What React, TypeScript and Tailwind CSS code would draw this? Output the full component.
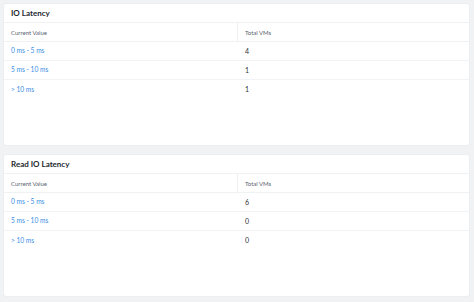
import React from "react";

type Row = { label: string; total: number };

const cards: { title: string; rows: Row[] }[] = [
  {
    title: "IO Latency",
    rows: [
      { label: "0 ms - 5 ms", total: 4 },
      { label: "5 ms - 10 ms", total: 1 },
      { label: "> 10 ms", total: 1 },
    ],
  },
  {
    title: "Read IO Latency",
    rows: [
      { label: "0 ms - 5 ms", total: 6 },
      { label: "5 ms - 10 ms", total: 0 },
      { label: "> 10 ms", total: 0 },
    ],
  },
];

function LatencyCard({ title, rows }: { title: string; rows: Row[] }) {
  return (
    <div className="bg-white rounded-[3px] border border-[#eceef0] h-[143px] flex flex-col">
      <div className="h-[18px] flex items-center px-[7px] text-[8px] font-bold text-[#22272e]">
        {title}
      </div>
      <div className="flex h-[20px] border-t border-b border-[#f0f1f3] text-[6px] text-[#5a6270]">
        <div className="w-[234px] flex items-center px-[7px] border-r border-[#eef0f2]">Current Value</div>
        <div className="flex-1 flex items-center px-[7px]">Total VMs</div>
      </div>
      {rows.map((row) => (
        <div key={row.label} className="flex h-[19px] border-b border-[#f2f3f5] last:border-b-0">
          <div className="w-[234px] flex items-center px-[7px] text-[6.6px] text-[#3a8ee6]">{row.label}</div>
          <div className="flex-1 flex items-center px-[7px] text-[7px] text-[#2a2f36]">{row.total}</div>
        </div>
      ))}
    </div>
  );
}

export default function App() {
  return (
    <div
      className="w-[474px] h-[302px] bg-[#f1f2f4] pl-[3px] pr-[4px] py-[3px] flex flex-col gap-[8px]"
      style={{ fontFamily: "Lato, 'Open Sans', sans-serif" }}
    >
      {cards.map((c) => (
        <LatencyCard key={c.title} title={c.title} rows={c.rows} />
      ))}
    </div>
  );
}
